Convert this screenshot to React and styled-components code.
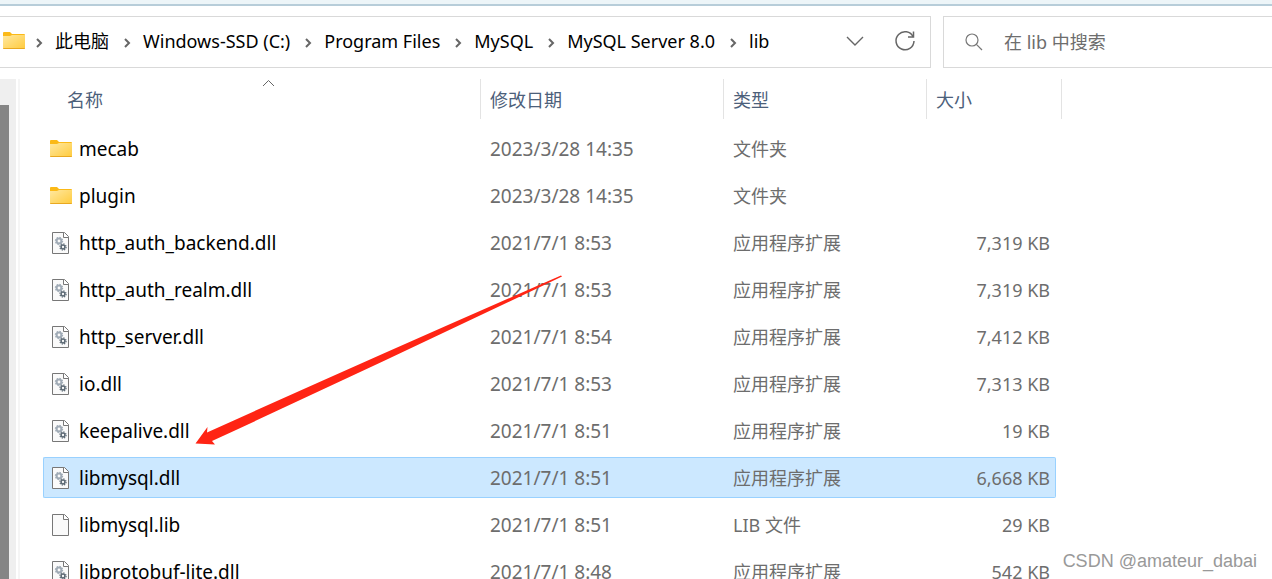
import React, { useState } from "react";
import styled, { createGlobalStyle } from "styled-components";

const GlobalStyle = createGlobalStyle`
  * { box-sizing: border-box; }
  body {
    margin: 0;
    background: #fff;
    font-family: "Noto Sans", "Noto Sans CJK SC", sans-serif;
    font-size: 18px;
    line-height: 24px;
    color: #000;
  }
`;

const Window = styled.div`
  position: relative;
  display: flex;
  flex-direction: column;
  height: 100vh;
  overflow: hidden;
`;

const TopEdge = styled.div`
  flex: none;
  height: 6px;
  background: #edf5f8;
  border-bottom: 2px solid #b7cdd9;
`;

const Toolbar = styled.header`
  display: flex;
  flex: none;
  gap: 12px;
  margin-top: 10px;
`;

const AddressBar = styled.nav`
  display: flex;
  flex: 1;
  align-items: center;
  height: 52px;
  padding: 0 13px 2px 2px;
  border: 1px solid #d9d9d9;
  border-left: 0;
`;

const Crumbs = styled.ol`
  display: flex;
  flex: 1;
  align-items: center;
  margin: 0;
  padding: 0;
  list-style: none;
  white-space: nowrap;
`;

const Crumb = styled.li`
  display: flex;
  align-items: center;

  svg { margin: 3px 12px 0 15px; }
  &:first-child svg { margin-left: 10px; }
  a { color: inherit; text-decoration: none; }
`;

const IconButton = styled.button`
  display: flex;
  align-items: center;
  justify-content: center;
  width: 24px;
  height: 24px;
  margin-left: ${(p) => p.$gap || 0}px;
  padding: 0;
  border: 0;
  background: none;
  color: #666;
`;

const SearchBox = styled.label`
  display: flex;
  align-items: center;
  gap: 21px;
  width: 329px;
  padding-left: 21px;
  border: 1px solid #d9d9d9;
  border-right: 0;
  color: #777;
`;

const SearchInput = styled.input`
  flex: 1;
  min-width: 0;
  padding: 0;
  border: 0;
  outline: 0;
  background: none;
  font: inherit;

  &::placeholder { color: #6d6d6d; opacity: 1; }
`;

const Body = styled.div`
  display: flex;
  flex: 1;
  min-height: 0;
`;

const NavScroll = styled.div`
  flex: none;
  width: 20px;
  margin-top: 11px;
  border-right: 2px solid #f5f5f5;
`;

const ScrollTrack = styled.div`
  width: 16px;
  height: 100%;
  padding-top: 26px;
  background: #efefef;
`;

const ScrollThumb = styled.div`
  width: 9px;
  height: 100%;
  background: #858585;
`;

const ListPane = styled.main`
  flex: 1;
  min-width: 0;
  padding: 5px 0 0 23px;
  overflow: hidden;
`;

const FileTable = styled.table`
  width: 1019px;
  table-layout: fixed;
  border-spacing: 0 6px;
`;

const Column = styled.col`
  width: ${(p) => p.$width}px;
`;

const HeadCell = styled.th`
  height: 43px;
  padding: 0;
  vertical-align: top;
  font-weight: 400;
  text-align: left;
`;

const HeadLabel = styled.div`
  position: relative;
  display: flex;
  align-items: center;
  height: 40px;
  padding: 2px 0 0 ${(p) => p.$indent}px;
  border-right: 1px solid #e3e3e3;
  color: #4c607a;
`;

const SortMark = styled.svg`
  position: absolute;
  top: 0;
  left: 50%;
`;

const Cell = styled.td`
  height: 41px;
  padding: 0 5px 0 9px;
  border: 0 solid ${(p) => (p.$selected ? "#99d1ff" : "transparent")};
  border-width: 1px 0;
  background: ${(p) => (p.$selected ? "#cce8ff" : "transparent")};
  color: #6d6d6d;
  font-size: ${(p) => (p.$wide ? 19 : 18)}px;
  white-space: nowrap;
  text-align: ${(p) => (p.$right ? "right" : "left")};

  &:first-child {
    padding-left: 5px;
    border-left-width: 1px;
    border-radius: 2px 0 0 2px;
    color: #000;
  }
  &:last-child {
    border-right-width: 1px;
    border-radius: 0 2px 2px 0;
  }
`;

const FileName = styled.div`
  display: flex;
  align-items: center;
  gap: 6px;
`;

const Arrow = styled.svg`
  position: absolute;
  top: 270px;
  left: 190px;
  pointer-events: none;
`;

const Watermark = styled.div`
  position: absolute;
  right: 15px;
  bottom: 6px;
  font-family: "Liberation Sans", sans-serif;
  color: #999;
  text-shadow: 1px 1px 0 #fff;
`;

const FolderIcon = () => (
  <svg width="24" height="24" viewBox="0 0 24 24" aria-hidden="true">
    <defs>
      <linearGradient id="folder" x1="0" y1="0" x2="1" y2="1">
        <stop offset="0" stopColor="#ffe8a0" />
        <stop offset="1" stopColor="#ffcb3d" />
      </linearGradient>
    </defs>
    <path d="M1 4q0-1 1-1h6l2 2h12q1 0 1 1v6H1z" fill="#fbb917" />
    <path d="M1 7h7l2-1h13v13q0 1-1 1H2q-1 0-1-1z" fill="url(#folder)" />
    <path d="M1 19h22q0 1-1 1H2q-1 0-1-1z" fill="#e9a820" />
  </svg>
);

const Gear = ({ x, y, r, color, width }) => (
  <g transform={`translate(${x} ${y})`} stroke={color} fill="none">
    <circle r={r} strokeWidth={width} />
    <circle r={r + 1.2} strokeWidth="1.2" strokeDasharray={`${((r + 1.2) * Math.PI) / 8}`} />
  </g>
);

const PageIcon = ({ gears }) => (
  <svg width="24" height="24" viewBox="0 0 24 24" aria-hidden="true">
    <path d="M3.5 1.5h12l4 4v17h-16z" fill="#fafafa" stroke="#777" />
    <path d="M14.5 1.5v5h5" fill="#fff" stroke="#777" />
    {gears && <Gear x={10} y={10} r={2.4} color="#a0abb6" width={2} />}
    {gears && <Gear x={14} y={16} r={1.9} color="#5d6a75" width={1.5} />}
  </svg>
);

const CrumbChevron = () => (
  <svg width="7" height="10" viewBox="0 0 7 10" fill="none" stroke="#666" strokeWidth="2" aria-hidden="true">
    <path d="M1 1l4 4-4 4" />
  </svg>
);

const crumbs = ["此电脑", "Windows-SSD (C:)", "Program Files", "MySQL", "MySQL Server 8.0", "lib"];

const DLL = "应用程序扩展";
const files = [
  ["folder", "mecab", "2023/3/28 14:35", "文件夹", ""],
  ["folder", "plugin", "2023/3/28 14:35", "文件夹", ""],
  ["dll", "http_auth_backend.dll", "2021/7/1 8:53", DLL, "7,319 KB"],
  ["dll", "http_auth_realm.dll", "2021/7/1 8:53", DLL, "7,319 KB"],
  ["dll", "http_server.dll", "2021/7/1 8:54", DLL, "7,412 KB"],
  ["dll", "io.dll", "2021/7/1 8:53", DLL, "7,313 KB"],
  ["dll", "keepalive.dll", "2021/7/1 8:51", DLL, "19 KB"],
  ["dll", "libmysql.dll", "2021/7/1 8:51", DLL, "6,668 KB"],
  ["file", "libmysql.lib", "2021/7/1 8:51", "LIB 文件", "29 KB"],
  ["dll", "libprotobuf-lite.dll", "2021/7/1 8:48", DLL, "542 KB"],
];

export default function App() {
  const [selected, setSelected] = useState("libmysql.dll");
  return (
    <Window>
      <GlobalStyle />
      <TopEdge />
      <Toolbar>
        <AddressBar>
          <FolderIcon />
          <Crumbs>
            {crumbs.map((name) => (
              <Crumb key={name}>
                <CrumbChevron />
                <a href="#path">{name}</a>
              </Crumb>
            ))}
          </Crumbs>
          <IconButton type="button" aria-label="History">
            <svg width="18" height="10" viewBox="0 0 18 10" fill="none" stroke="currentColor" strokeWidth="1.4">
              <path d="M1 1l8 8 8-8" />
            </svg>
          </IconButton>
          <IconButton type="button" aria-label="Refresh" $gap={26}>
            <svg width="22" height="22" viewBox="0 0 22 22" fill="none" stroke="currentColor" strokeWidth="1.5">
              <path d="M19.2 7A9 9 0 1 0 20 11" />
              <path d="M19.5 1.5v5.500h-5.500" />
            </svg>
          </IconButton>
        </AddressBar>
        <SearchBox>
          <svg width="18" height="18" viewBox="0 0 18 18" fill="none" stroke="currentColor" strokeWidth="1.2" aria-hidden="true">
            <circle cx="7" cy="7" r="6" />
            <path d="M11.4 11.4l5.600 5.600" />
          </svg>
          <SearchInput type="search" placeholder="在 lib 中搜索" />
        </SearchBox>
      </Toolbar>
      <Body>
        <NavScroll>
          <ScrollTrack>
            <ScrollThumb />
          </ScrollTrack>
        </NavScroll>
        <ListPane>
          <FileTable>
            <colgroup>
              <Column $width={438} />
              <Column $width={243} />
              <Column $width={203} />
              <Column $width={129} />
              <Column $width={6} />
            </colgroup>
            <thead>
              <tr>
                <HeadCell>
                  <HeadLabel $indent={24}>
                    名称
                    <SortMark width="13" height="8" viewBox="0 0 13 8" fill="none" stroke="#666">
                      <path d="M1 7l5.500-5.500L12 7" />
                    </SortMark>
                  </HeadLabel>
                </HeadCell>
                <HeadCell><HeadLabel $indent={9}>修改日期</HeadLabel></HeadCell>
                <HeadCell><HeadLabel $indent={9}>类型</HeadLabel></HeadCell>
                <HeadCell colSpan={2}><HeadLabel $indent={9}>大小</HeadLabel></HeadCell>
              </tr>
            </thead>
            <tbody>
              {files.map(([kind, name, date, type, size]) => {
                const on = name === selected;
                return (
                  <tr key={name} onClick={() => setSelected(name)}>
                    <Cell $selected={on} $wide>
                      <FileName>
                        {kind === "folder" ? <FolderIcon /> : <PageIcon gears={kind === "dll"} />}
                        {name}
                      </FileName>
                    </Cell>
                    <Cell $selected={on} $wide>{date}</Cell>
                    <Cell $selected={on}>{type}</Cell>
                    <Cell $selected={on} $right>{size}</Cell>
                  </tr>
                );
              })}
            </tbody>
          </FileTable>
        </ListPane>
      </Body>
      <Arrow width="380" height="184" viewBox="0 0 380 184" aria-hidden="true">
        <path d="M5.500 173.500L17.500 157L17 162.500Q200 80 371 5.500L372 6.500Q200 89 22 171L25 174.500Z" fill="#ff2414" />
      </Arrow>
      <Watermark>CSDN @amateur_dabai</Watermark>
    </Window>
  );
}
